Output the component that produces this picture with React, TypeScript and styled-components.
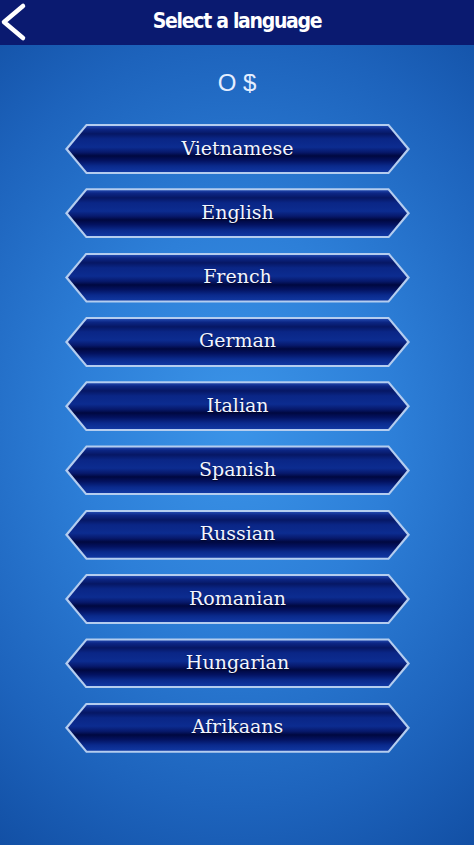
import React from 'react'
import styled, { createGlobalStyle } from 'styled-components'

const GlobalStyle = createGlobalStyle`
  html, body {
    margin: 0;
    padding: 0;
    height: 100%;
  }
  body {
    background: #0e4ca0;
  }
`

const languages = [
  'Vietnamese',
  'English',
  'French',
  'German',
  'Italian',
  'Spanish',
  'Russian',
  'Romanian',
  'Hungarian',
  'Afrikaans',
]

const Screen = styled.div`
  width: 474px;
  height: 845px;
  display: flex;
  flex-direction: column;
  overflow: hidden;
  background: radial-gradient(
    ellipse 95% 65% at 50% 50%,
    #3b94e8 0%,
    #2d7fd8 35%,
    #1d63bc 70%,
    #0f4a9e 100%
  );
`

const TopBar = styled.header`
  height: 45px;
  flex-shrink: 0;
  background: #0a1a70;
  display: flex;
  align-items: center;
  justify-content: center;
  position: relative;
`

const BackButton = styled.button`
  position: absolute;
  left: 0;
  top: 2px;
  width: 32px;
  height: 40px;
  padding: 0;
  border: none;
  background: none;
  cursor: pointer;
`

const Title = styled.h1`
  margin: -3px 0 0;
  font-family: 'DejaVu Sans Condensed', 'DejaVu Sans', sans-serif;
  font-weight: bold;
  font-size: 21px;
  letter-spacing: -1.3px;
  color: #ffffff;
`

const Balance = styled.div`
  height: 79px;
  display: flex;
  align-items: center;
  justify-content: center;
  font-family: 'Liberation Sans', Arial, sans-serif;
  font-size: 24px;
  color: #e4eeff;
  padding-bottom: 4px;
  box-sizing: border-box;
  white-space: pre;
`

const List = styled.div`
  display: flex;
  flex-direction: column;
  align-items: center;
  gap: 14.3px;
`

const Frame = styled.button`
  width: 345px;
  height: 50px;
  padding: 2px 3px;
  border: none;
  margin: 0 0 0 1px;
  box-sizing: border-box;
  background: #b4cdef;
  clip-path: polygon(21px 0, calc(100% - 21px) 0, 100% 50%, calc(100% - 21px) 100%, 21px 100%, 0 50%);
  cursor: pointer;
  display: flex;
`

const Face = styled.span`
  flex: 1;
  display: flex;
  align-items: center;
  justify-content: center;
  clip-path: polygon(19px 0, calc(100% - 19px) 0, 100% 50%, calc(100% - 19px) 100%, 19px 100%, 0 50%);
  background: linear-gradient(
    to bottom,
    #2148ae 0%,
    #0c2684 7%,
    #061764 17%,
    #0a2686 28%,
    #0c2c90 46%,
    #07196c 57%,
    #000840 65%,
    #031260 75%,
    #0a2a8c 87%,
    #1138a2 100%
  );
  font-family: 'DejaVu Serif', 'Liberation Serif', serif;
  font-size: 19px;
  color: #f2f5ff;
  text-shadow: 0 1px 1px rgba(0, 0, 20, 0.6);
  padding-bottom: 3px;
`

const ChevronLeft = () => (
  <svg width="32" height="40" viewBox="0 0 32 40">
    <path
      d="M23 4 L4 20 L23 36"
      fill="none"
      stroke="#ffffff"
      strokeWidth="4.5"
      strokeLinecap="round"
      strokeLinejoin="round"
    />
  </svg>
)

export default function App() {
  return (
    <Screen>
      <GlobalStyle />
      <TopBar>
        <BackButton aria-label="Back">
          <ChevronLeft />
        </BackButton>
        <Title>Select a language</Title>
      </TopBar>
      <Balance>O $</Balance>
      <List>
        {languages.map(lang => (
          <Frame key={lang}>
            <Face>{lang}</Face>
          </Frame>
        ))}
      </List>
    </Screen>
  )
}
